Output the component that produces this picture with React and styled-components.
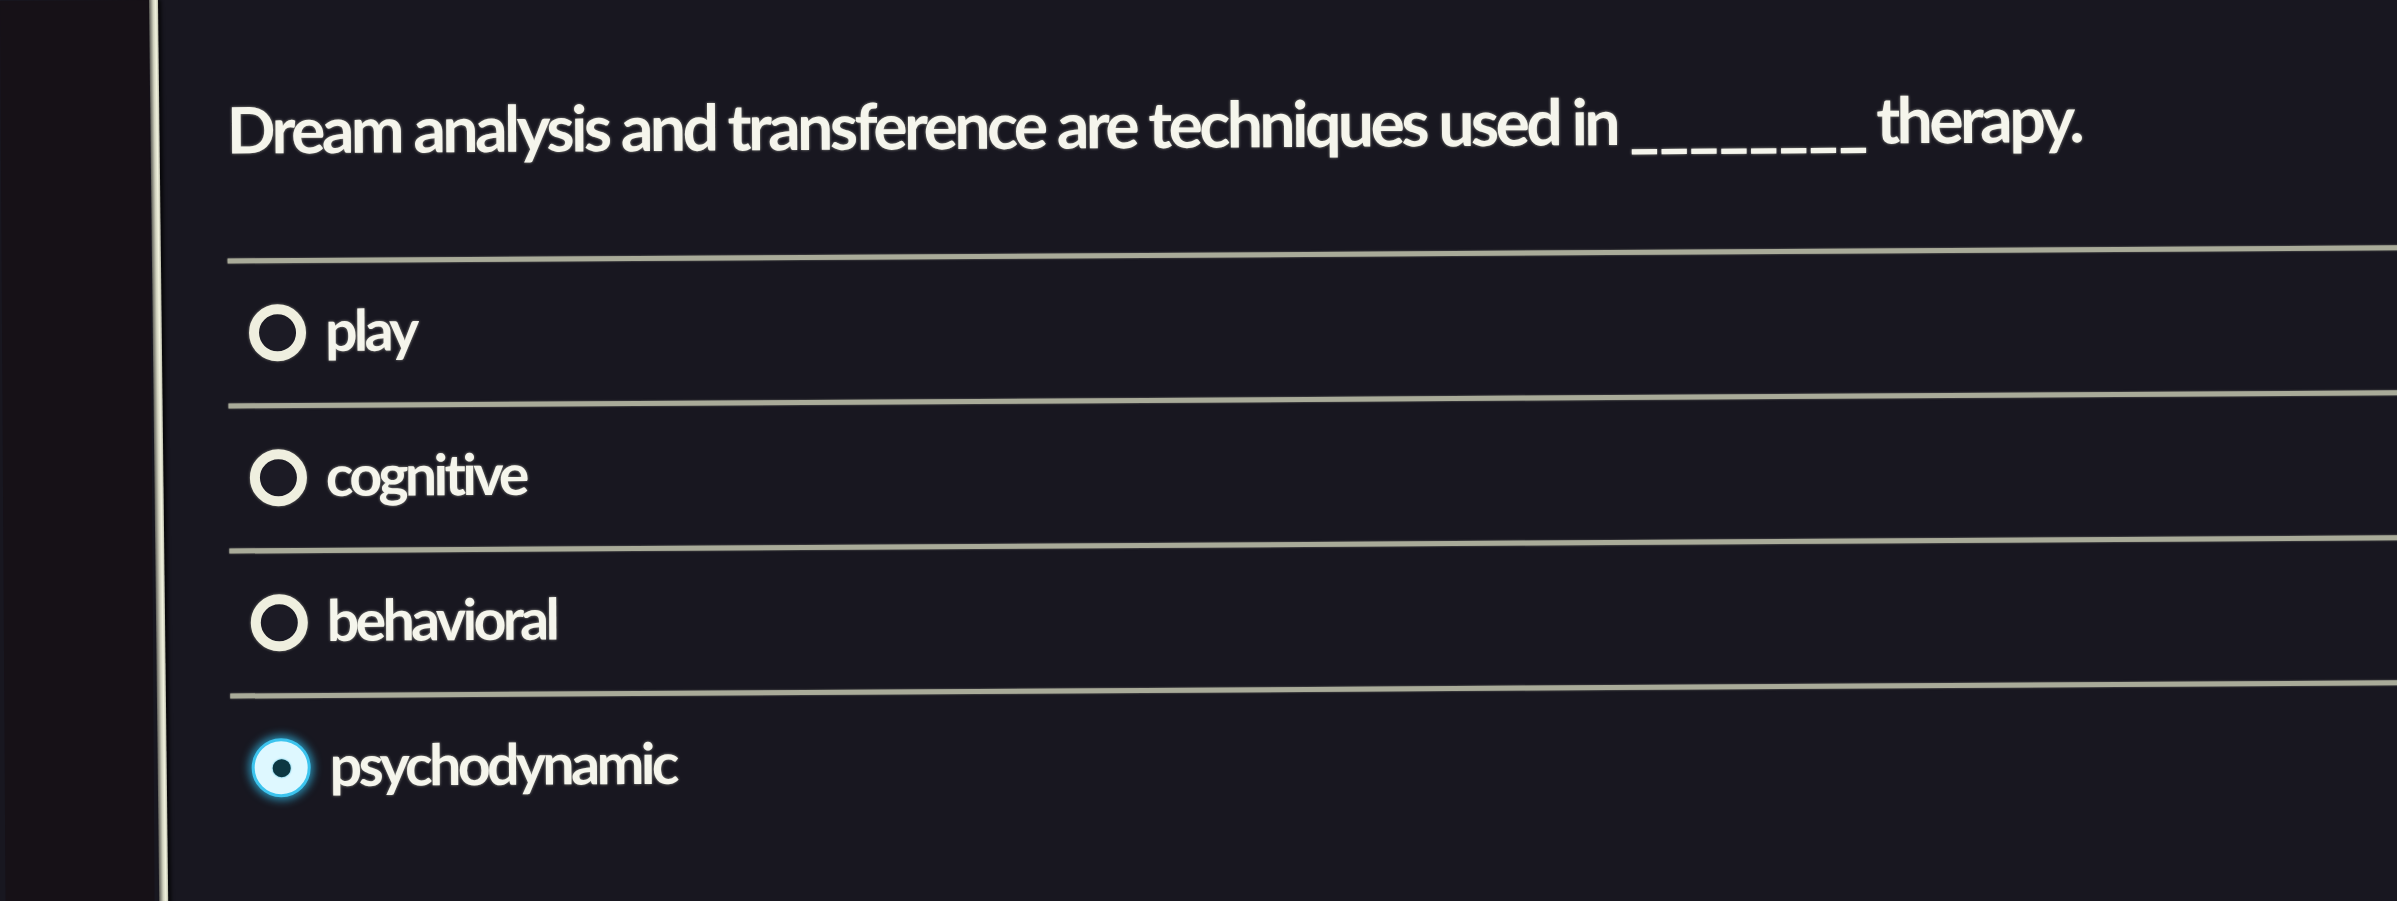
import React, { useState } from "react";
import styled, { createGlobalStyle } from "styled-components";

const Global = createGlobalStyle`
  html, body { margin: 0; padding: 0; background: #181720; overflow: hidden; }
  #root { width: 2397px; height: 901px; overflow: hidden; }
`;

// the photo is a little tilted, so the whole screen is turned slightly
const Page = styled.div`
  display: flex;
  width: 2397px;
  height: 940px;
  transform: rotate(-0.35deg);
  transform-origin: 150px 0;
`;

const Bezel = styled.div`
  width: 149px;
  flex: none;
  background: #161117;
`;

const Divider = styled.div`
  width: 9px;
  flex: none;
  background: linear-gradient(90deg, #5d5d57 0%, #cfd0bd 45%, #f1f2de 75%, #b9baa8 100%);
  box-shadow: 3px 0 4px rgba(0, 0, 0, 0.7);
  transform: rotate(-0.3deg);
  transform-origin: 50% 0;
`;

const Panel = styled.div`
  flex: 1;
  background: #181720;
  padding: 92px 0 0 68px;
  font-family: Lato, "Open Sans", sans-serif;
  font-variant-ligatures: none;
  color: #f5f5ec;
`;

const Question = styled.div`
  font-size: 64px;
  font-weight: 700;
  line-height: 1.2;
  letter-spacing: -3.4px;
  white-space: nowrap;
  text-shadow: 0 0 3px rgba(255, 255, 235, 0.55);
`;

const Blank = styled.span`
  letter-spacing: 0;
  margin-right: -4px;
`;

const Options = styled.div`
  margin-top: 90px;
  display: flex;
  flex-direction: column;
`;

const Rule = styled.div`
  height: 5px;
  background: #a9ab99;
  box-shadow: 0 0 2px rgba(190, 192, 170, 0.6);
`;

const Row = styled.label`
  height: 140px;
  display: flex;
  align-items: center;
  gap: 19px;
  padding-left: 21px;
  cursor: pointer;
`;

const Radio = styled.span`
  width: ${(p) => (p.$checked ? "59px" : "57px")};
  height: ${(p) => (p.$checked ? "59px" : "57px")};
  flex: none;
  box-sizing: border-box;
  border-radius: 50%;
  display: flex;
  align-items: center;
  justify-content: center;
  border: ${(p) => (p.$checked ? "3px solid #3cc4ee" : "10px solid #efefdf")};
  background: ${(p) => (p.$checked ? "#def8ff" : "#1c1b25")};
  box-shadow: ${(p) =>
    p.$checked ? "0 0 9px 3px rgba(50, 185, 230, 0.7)" : "0 0 3px rgba(255, 255, 230, 0.45)"};
`;

const Dot = styled.span`
  width: 18px;
  height: 18px;
  border-radius: 50%;
  background: #0d3742;
  box-shadow: 0 0 2px #2aa6c8;
`;

const OptionText = styled.span`
  font-size: 57px;
  font-weight: 700;
  line-height: 1;
  letter-spacing: -3.5px;
  padding-bottom: 6px;
  text-shadow: 0 0 3px rgba(255, 255, 235, 0.55);
`;

const options = ["play", "cognitive", "behavioral", "psychodynamic"];

export default function App() {
  const [checked, setChecked] = useState("psychodynamic");

  return (
    <>
      <Global />
      <Page>
        <Bezel />
        <Divider />
        <Panel>
          <Question>
            Dream analysis and transference are techniques used in <Blank>________</Blank> therapy.
          </Question>
          <Options>
            {options.map((o) => (
              <React.Fragment key={o}>
                <Rule />
                <Row onClick={() => setChecked(o)}>
                  <Radio $checked={checked === o}>{checked === o && <Dot />}</Radio>
                  <OptionText>{o}</OptionText>
                </Row>
              </React.Fragment>
            ))}
          </Options>
        </Panel>
      </Page>
    </>
  );
}
